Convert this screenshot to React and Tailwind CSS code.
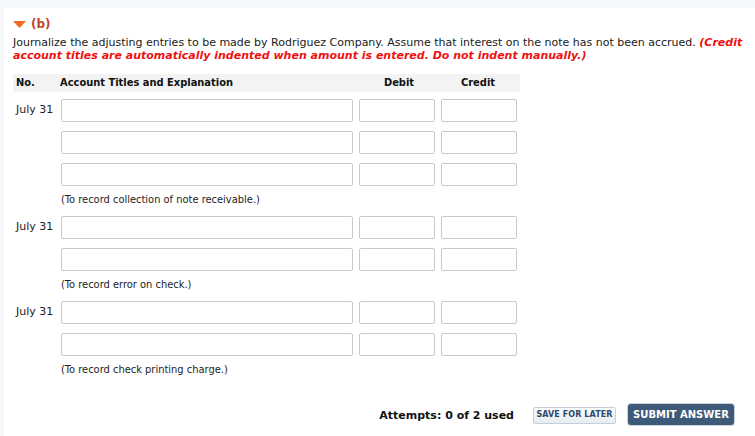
import React from 'react';

const font = { fontFamily: '"DejaVu Sans", Verdana, sans-serif' };
const narrow = { fontFamily: '"DejaVu Sans Condensed", Tahoma, sans-serif' };

function Field({ w }) {
  return (
    <input
      type="text"
      className={`${w} h-[23px] shrink-0 rounded-[2px] border border-[#c9c9c9] bg-white outline-none`}
    />
  );
}

function EntryRow({ label }) {
  return (
    <div className="flex items-center">
      <div className="w-[48px] shrink-0 pl-[3px] text-[11px] text-[#222]">{label}</div>
      <Field w="w-[292px]" />
      <div className="w-[6px] shrink-0" />
      <Field w="w-[76px]" />
      <div className="w-[6px] shrink-0" />
      <Field w="w-[76px]" />
    </div>
  );
}

function EntryGroup({ rows, note }) {
  return (
    <div className="flex flex-col">
      <div className="flex flex-col gap-[9px]">
        {Array.from({ length: rows }).map((_, i) => (
          <EntryRow key={i} label={i === 0 ? 'July 31' : ''} />
        ))}
      </div>
      <div className="mt-[6px] h-[16px] pl-[48px] text-[11px] leading-[16px] text-[#222]" style={narrow}>
        {note}
      </div>
    </div>
  );
}

export default function App() {
  return (
    <div className="min-h-[436px] bg-[#f4f7fb] pl-[4px] pt-[8px]" style={font}>
      <div className="min-h-[428px] bg-white pl-[9px] pr-[21px] pt-[9px]">
        <div className="flex h-[14px] items-center gap-[5px]">
          <svg width="13" height="7" viewBox="0 0 13 7">
            <polygon points="0,0 13,0 6.5,7" fill="#f26a21" />
          </svg>
          <span className="text-[12px] font-bold leading-[14px] text-[#c2452d]">(b)</span>
        </div>

        <div className="mt-[5px] text-[11px] leading-[13px] text-[#1a1a1a]">
          <div className="whitespace-nowrap">
            Journalize the adjusting entries to be made by Rodriguez Company. Assume that interest on the note has not been accrued.{' '}
            <span className="font-bold italic text-[#ee1111]">(Credit</span>
          </div>
          <div className="whitespace-nowrap font-bold italic text-[#ee1111]">
            account titles are automatically indented when amount is entered. Do not indent manually.)
          </div>
        </div>

        <div
          className="mt-[12px] flex h-[18px] w-[507px] items-center bg-[#f3f3f3] text-[11px] font-bold text-[#111]"
          style={narrow}
        >
          <div className="w-[47px] pl-[3px]">No.</div>
          <div className="w-[298px]">Account Titles and Explanation</div>
          <div className="w-[82px] text-center">Debit</div>
          <div className="w-[76px] text-center">Credit</div>
        </div>

        <div className="mt-[7px] flex flex-col gap-[8px]">
          <EntryGroup rows={3} note="(To record collection of note receivable.)" />
          <EntryGroup rows={2} note="(To record error on check.)" />
          <EntryGroup rows={2} note="(To record check printing charge.)" />
        </div>

        <div className="mt-[26px] flex items-center justify-end">
          <span className="mr-[19px] pt-[3px] text-[11px] font-bold text-[#111]">Attempts: 0 of 2 used</span>
          <button className="mr-[12px] mt-[1px] h-[17px] w-[83px] rounded-[2px] border border-[#c5d0dc] bg-gradient-to-b from-[#f8fafc] to-[#e8edf3] text-[8px] font-bold uppercase tracking-[0.1px] text-[#2f4a68]">
            Save for later
          </button>
          <button className="h-[21px] w-[106px] rounded-[3px] bg-[#3e5a79] text-[10px] font-bold uppercase text-white shadow-[0_0_0_1px_#c8d2dd]">
            Submit Answer
          </button>
        </div>
      </div>
    </div>
  );
}
